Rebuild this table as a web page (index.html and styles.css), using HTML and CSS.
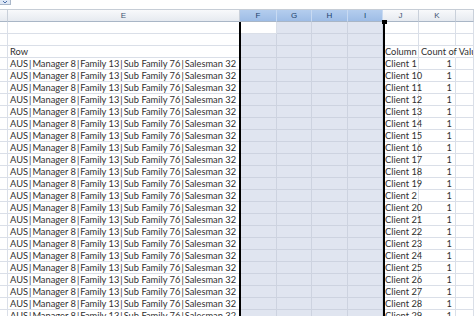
FILE: index.html
```html
<!DOCTYPE html>
<html>
<head>
<meta charset="utf-8">
<link rel="stylesheet" href="styles.css">
</head>
<body>
<div class="sheet">
  <div class="topbar">
    <div class="expand"><svg width="10" height="4" viewBox="0 0 10 4"><path d="M3 1 L5 3 L7 1" fill="none" stroke="#4a6ea8" stroke-width="1"/></svg></div>
  </div>
  <div class="grid" id="grid"></div>
  <div class="selection"><span class="handle"></span></div>
</div>
<script src="app.js"></script>
</body>
</html>
```
FILE: styles.css
```css
html, body { margin: 0; padding: 0; background: #fff; }
body { width: 474px; height: 316px; overflow: hidden; font-family: "Lato", "Liberation Sans", sans-serif; }
.sheet { position: relative; width: 474px; height: 316px; overflow: hidden; }
.topbar { height: 9px; border-bottom: 1px solid #c6cdd6; background: #fff; position: relative; }
.expand { position: absolute; left: 0; top: 0; width: 10px; height: 4px; background: #dfe8f5; border-right: 1px solid #aab7c9; border-bottom: 1px solid #aab7c9; }
.expand svg { display: block; }
.grid { display: grid; grid-template-columns: 8px 232px 37px 35px 36px 35px 36px 37px 18px; grid-auto-rows: 12px; grid-template-rows: 12px; }
.cell { box-sizing: border-box; border-right: 1px solid #dadfe8; border-bottom: 1px solid #dadfe8; font-size: 9.3px; line-height: 11px; color: #303030; white-space: nowrap; padding-left: 2px; overflow: visible; }
.pipe { margin: 0 1px; }
.cell.sel { background: #e0e5f0; border-right-color: #cdd3e0; border-bottom-color: #cdd3e0; }
.cell.num { text-align: right; padding-right: 3px; }
.cell.over { border-right-color: transparent; }
.cell.last { background: transparent; }
.hd { box-sizing: border-box; background: linear-gradient(#f8f9fb, #e6eaf0); border-right: 1px solid #c9d0da; border-bottom: 1px solid #a9b6c6; font-size: 8px; line-height: 11px; text-align: center; color: #3f5572; font-family: "Liberation Sans", sans-serif; }
.hd.hsel { background: linear-gradient(#b4cdee, #9ebde6); border-right-color: #c8daf2; color: #20416b; }
.selection { position: absolute; left: 239px; top: 22px; width: 142px; height: 300px; border-left: 2px solid #000; border-right: 2px solid #000; }
.handle { position: absolute; right: -4px; top: -2px; width: 5px; height: 4px; background: #000; }
```
FILE: app.js
```js
(function () {
  var g = document.getElementById('grid');
  var hdrs = ['', 'E', 'F', 'G', 'H', 'I', 'J', 'K', ''];
  var html = '';
  hdrs.forEach(function (h, i) {
    html += '<div class="hd' + (i >= 2 && i <= 5 ? ' hsel' : '') + '">' + h + '</div>';
  });
  function row(e, j, k, opts) {
    opts = opts || {};
    var s = '';
    s += '<div class="cell"></div>';
    s += '<div class="cell">' + e + '</div>';
    for (var c = 0; c < 4; c++) s += '<div class="cell sel"></div>';
    s += '<div class="cell">' + j + '</div>';
    s += '<div class="cell' + (opts.over ? ' over' : '') + (opts.num ? ' num' : '') + '">' + k + '</div>';
    s += '<div class="cell last"></div>';
    return s;
  }
  html += row('', '', '');
  html += row('', '', '');
  html += row('Row', 'Column', 'Count of Values', { over: true });
  var label = ['AUS', 'Manager 8', 'Family 13', 'Sub Family 76', 'Salesman 32'].join('<span class="pipe">|</span>');
  var clients = [1, 10, 11, 12, 13, 14, 15, 16, 17, 18, 19, 2, 20, 21, 22, 23, 24, 25, 26, 27, 28, 29];
  clients.forEach(function (c) {
    html += row(label, 'Client ' + c, '1', { num: true });
  });
  g.innerHTML = html;
  var cells = g.querySelectorAll('.cell');
  cells[2].classList.remove('sel');
  cells[2].classList.add('active');
})();
```
